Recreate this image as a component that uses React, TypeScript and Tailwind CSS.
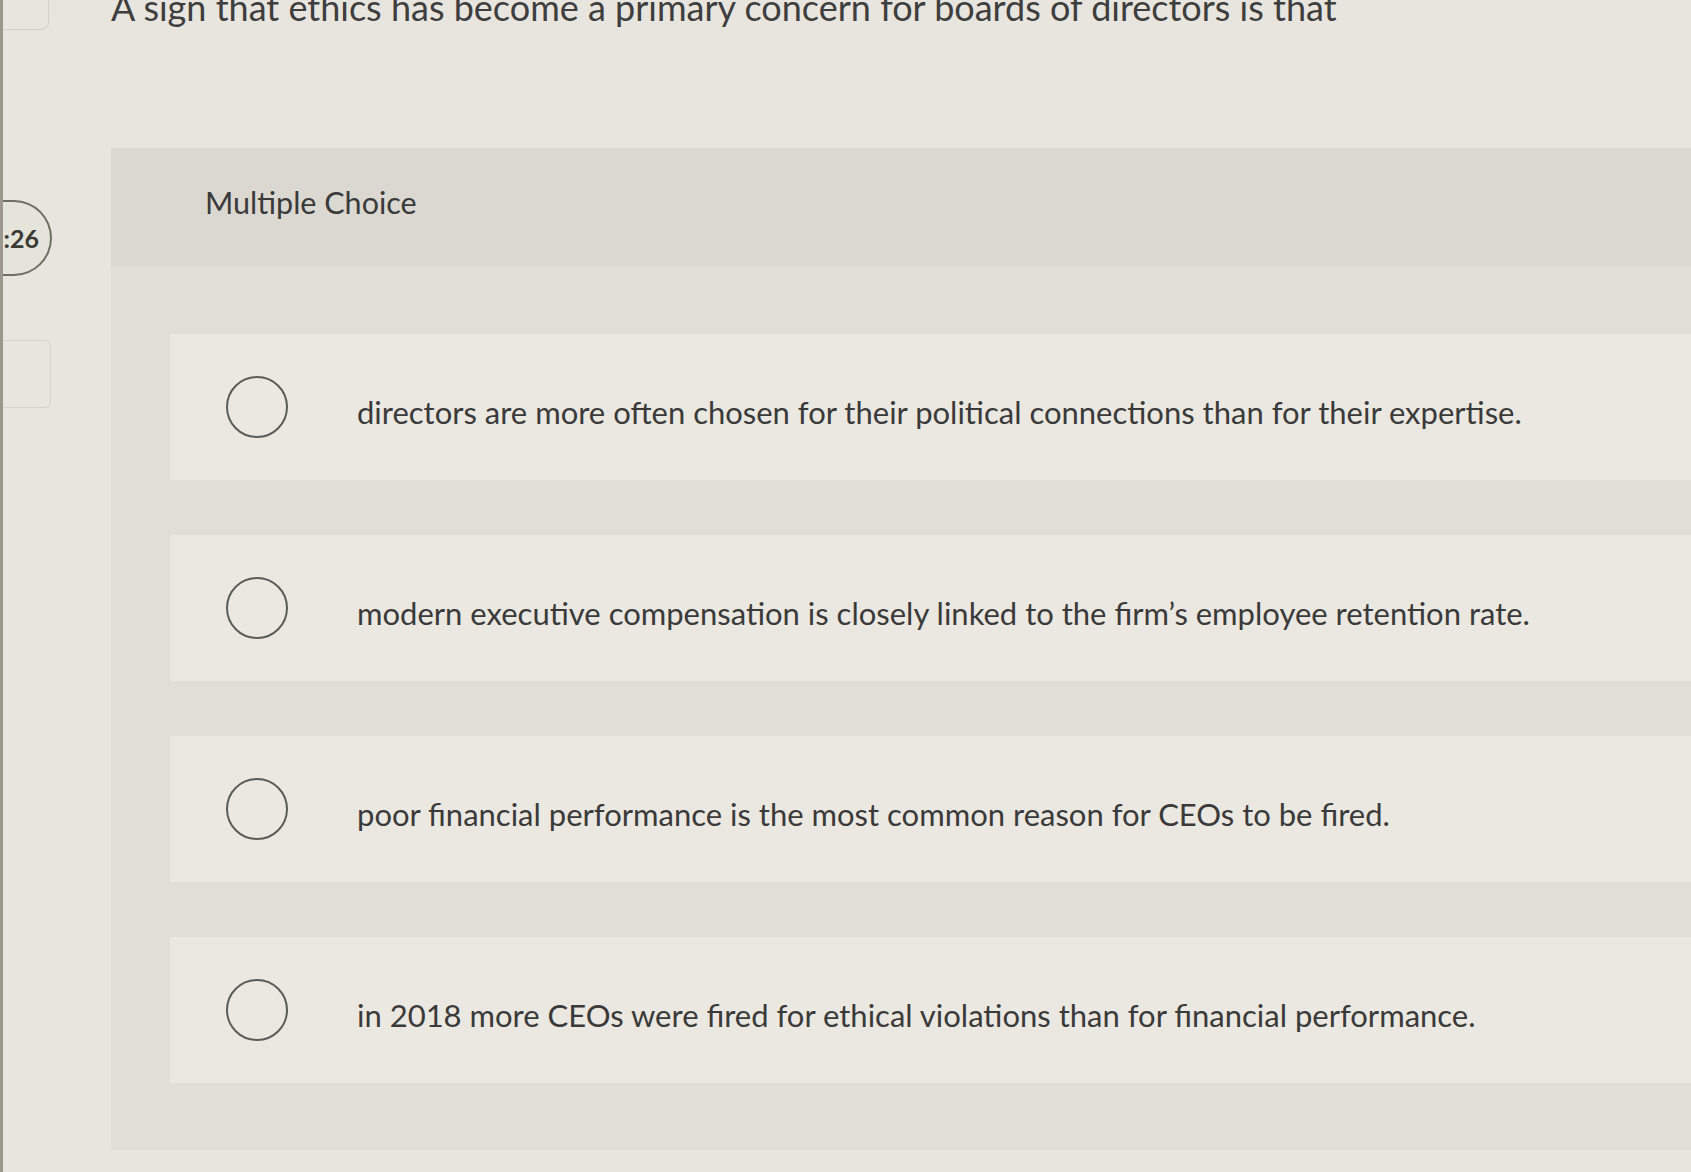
import React from "react";

const options = [
  "directors are more often chosen for their political connections than for their expertise.",
  "modern executive compensation is closely linked to the firm’s employee retention rate.",
  "poor financial performance is the most common reason for CEOs to be fired.",
  "in 2018 more CEOs were fired for ethical violations than for financial performance.",
];

export default function App() {
  return (
    <div
      className="w-[1691px] h-[1172px] overflow-hidden bg-[#e8e5de] flex text-[#3b3b3b]"
      style={{ fontFamily: "Lato, 'Open Sans', sans-serif" }}
    >
      {/* left rail */}
      <div className="w-[111px] shrink-0 border-l-[3px] border-[#9a978f] flex flex-col">
        <div className="mt-[-20px] h-[50px] w-[46px] rounded-br-[8px] border border-l-0 border-[#d3d0c9]" />
        <div className="mt-[170px] h-[76px] w-[49px] rounded-r-[38px] border-2 border-l-0 border-[#6e6e63] bg-[#e5e4db] flex items-center justify-end pr-[11px]">
          <span className="text-[25px] font-bold text-[#3a3a35] leading-none">:26</span>
        </div>
        <div className="mt-[64px] h-[68px] w-[48px] rounded-r-[6px] border border-l-0 border-[#d5d2cb]" />
      </div>

      {/* main */}
      <div className="flex-1 flex flex-col">
        <div className="mt-[-13px] h-[40px] text-[36px] leading-[40px] whitespace-nowrap text-[#3e3e3e]">
          A sign that ethics has become a primary concern for boards of directors is that
        </div>
        <div className="mt-[121px] h-[1002px] bg-[#e1ded7] flex flex-col">
          <div className="h-[118px] bg-[#dbd8d1] flex items-center pl-[94px] pb-[8px]">
            <span className="text-[30.5px] text-[#3a3a3a]">Multiple Choice</span>
          </div>
          <div className="flex flex-col gap-[55px] pt-[68px] pl-[59px]">
            {options.map((o) => (
              <div key={o} className="h-[146px] bg-[#ebe8e1] flex items-center">
                <div className="ml-[56px] w-[62px] h-[62px] rounded-full border-2 border-[#5b5b58] shrink-0" />
                <span className="ml-[69px] pt-[10px] text-[31px] whitespace-nowrap text-[#3a3a3a]">{o}</span>
              </div>
            ))}
          </div>
        </div>
      </div>
    </div>
  );
}
